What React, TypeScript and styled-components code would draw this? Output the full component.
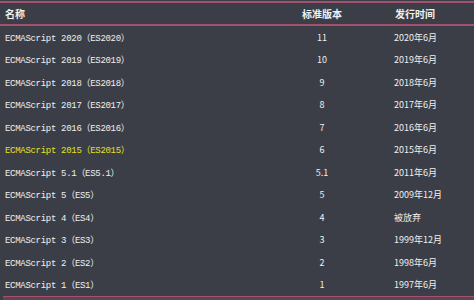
import styled, { createGlobalStyle } from "styled-components";

// ECMAScript 版本一览表
const versions = [
  { name: "ECMAScript 2020（ES2020）", ver: "11", date: "2020年6月" },
  { name: "ECMAScript 2019（ES2019）", ver: "10", date: "2019年6月" },
  { name: "ECMAScript 2018（ES2018）", ver: "9", date: "2018年6月" },
  { name: "ECMAScript 2017（ES2017）", ver: "8", date: "2017年6月" },
  { name: "ECMAScript 2016（ES2016）", ver: "7", date: "2016年6月" },
  { name: "ECMAScript 2015（ES2015）", ver: "6", date: "2015年6月", hot: true },
  { name: "ECMAScript 5.1（ES5.1）", ver: "5.1", date: "2011年6月" },
  { name: "ECMAScript 5（ES5）", ver: "5", date: "2009年12月" },
  { name: "ECMAScript 4（ES4）", ver: "4", date: "被放弃" },
  { name: "ECMAScript 3（ES3）", ver: "3", date: "1999年12月" },
  { name: "ECMAScript 2（ES2）", ver: "2", date: "1998年6月" },
  { name: "ECMAScript 1（ES1）", ver: "1", date: "1997年6月" },
];

const GlobalStyle = createGlobalStyle`
  html, body {
    margin: 0;
    background: #3b3e46;
  }
`;

const App = () => {
  return (
    <>
      <GlobalStyle />
      <Table>
        <HeadRow>
          <HeadCell>名称</HeadCell>
          <HeadCell $center>标准版本</HeadCell>
          <HeadCell>发行时间</HeadCell>
        </HeadRow>
        {versions.map((v) => (
          <Row key={v.name}>
            <NameCell $hot={v.hot}>{v.name}</NameCell>
            <NumCell>{v.ver}</NumCell>
            <DateCell>{v.date}</DateCell>
          </Row>
        ))}
        <Footer />
      </Table>
    </>
  );
};

export default App;

const Table = styled.div`
  display: flex;
  flex-direction: column;
  width: 474px;
  height: 300px;
  overflow: hidden;
  padding-top: 1px;
  box-sizing: border-box;
  color: #f0f0f0;
`;

const Grid = styled.div`
  display: grid;
  grid-template-columns: 254px 136px 1fr;
  align-items: center;
`;

const HeadRow = styled(Grid)`
  height: 21px;
  border-top: 2px solid #a4506f;
  border-bottom: 2px solid #a4506f;
`;

const HeadCell = styled.div<{ $center?: boolean }>`
  font-family: "Noto Sans CJK SC", sans-serif;
  font-weight: bold;
  font-size: 10px;
  padding: 0 5px;
  text-align: ${(props) => (props.$center ? "center" : "left")};
`;

const Row = styled(Grid)`
  height: 22.5px;
`;

const NameCell = styled.div<{ $hot?: boolean }>`
  font-family: "Liberation Mono", "Noto Sans CJK SC", monospace;
  font-size: 9px;
  letter-spacing: -0.3px;
  padding: 0 5px;
  color: ${(props) => (props.$hot ? "#e4e21e" : "#f0f0f0")};
`;

const NumCell = styled.div`
  font-family: "Noto Sans CJK SC", sans-serif;
  font-size: 9px;
  text-align: center;
`;

const DateCell = styled.div`
  font-family: "Noto Sans CJK SC", sans-serif;
  font-size: 9px;
  padding: 0 4px;
`;

const Footer = styled.div`
  flex: 1;
  margin-left: 3px;
  border-top: 1px solid #a4506f;
  background: #5e4551;
`;
